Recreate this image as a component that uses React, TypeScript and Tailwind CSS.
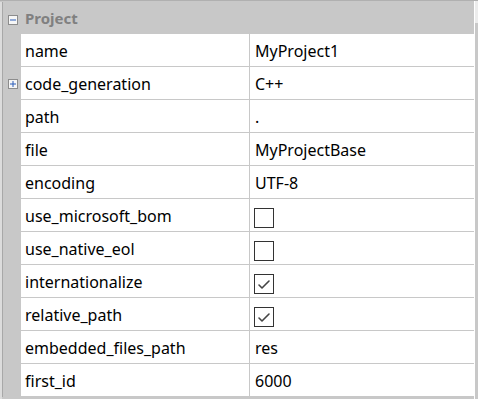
import React from "react";

type Row = { name: string; value?: string; check?: boolean; expand?: boolean };

const rows: Row[] = [
  { name: "name", value: "MyProject1" },
  { name: "code_generation", value: "C++", expand: true },
  { name: "path", value: "." },
  { name: "file", value: "MyProjectBase" },
  { name: "encoding", value: "UTF-8" },
  { name: "use_microsoft_bom", check: false },
  { name: "use_native_eol", check: false },
  { name: "internationalize", check: true },
  { name: "relative_path", check: true },
  { name: "embedded_files_path", value: "res" },
  { name: "first_id", value: "6000" },
];

function ToggleBox({ plus }: { plus: boolean }) {
  return (
    <svg width="10" height="10" viewBox="0 0 10 10" className="block">
      <rect x="0.5" y="0.5" width="9" height="9" fill="#f6f6f6" stroke="#8c8c8c" />
      <line x1="2" y1="5" x2="8" y2="5" stroke="#2a5db8" strokeWidth="1" />
      {plus && <line x1="5" y1="2" x2="5" y2="8" stroke="#2a5db8" strokeWidth="1" />}
    </svg>
  );
}

function CheckBox({ checked }: { checked: boolean }) {
  return (
    <svg width="20" height="20" viewBox="0 0 20 20" className="block mt-[9px]">
      <rect x="0.5" y="0.5" width="19" height="19" fill="#ffffff" stroke="#333333" />
      {checked && (
        <polyline
          points="5,11 8,14 15,7"
          fill="none"
          stroke="#444444"
          strokeWidth="1.6"
          strokeLinejoin="round"
          strokeLinecap="round"
        />
      )}
    </svg>
  );
}

export default function App() {
  return (
    <div
      className="w-[478px] h-[399px] bg-white flex flex-col overflow-hidden text-black"
      style={{ fontFamily: '"Noto Sans", "Noto Sans CJK SC", sans-serif' }}
    >
      <div className="h-[1px] bg-[#b0b0b0] w-full shrink-0" />
      <div className="flex flex-1 min-h-0">
        <div className="w-[474px] flex flex-col">
          <div className="h-[1px] bg-[#c8c8c8]" />
          <div className="flex items-center h-[32px] bg-[#c8c8c8] border-l-[2px] border-[#dcdcdc]">
            <div className="w-[19px] h-full flex items-center justify-center pl-[1px] pt-[4px] border-l border-[#a8a8a8]">
              <ToggleBox plus={false} />
            </div>
            <span className="pl-[4px] text-[15px] font-bold text-[#808080] leading-none">Project</span>
          </div>
          {rows.map((r, i) => (
            <div key={i} className="flex h-[33px] border-l-[2px] border-[#dcdcdc]">
              <div className="w-[19px] bg-[#c8c8c8] border-l border-[#a8a8a8] flex items-center justify-center pl-[1px]">
                {r.expand && <ToggleBox plus={true} />}
              </div>
              <div className="flex flex-1 border-b border-[#c8c8c8]">
                <div className="w-[229px] border-r border-[#c8c8c8] pl-[4px] flex items-center text-[16px] pt-[2px]">
                  {r.name}
                </div>
                <div className="flex-1 pl-[4px] flex items-start text-[16px]">
                  {r.check === undefined ? (
                    <span className="h-full flex items-center pt-[2px] pl-[1px]">{r.value}</span>
                  ) : (
                    <CheckBox checked={r.check} />
                  )}
                </div>
              </div>
            </div>
          ))}
          <div className="flex-1 bg-[#c8c8c8] border-l-[2px] border-[#dcdcdc]" />
        </div>
        <div className="w-[1px] bg-white" />
        <div className="w-[3px] flex flex-col">
          <div className="h-[22px] bg-[#ececec]" />
          <div className="flex-1 bg-[#c8c8c8]" />
        </div>
      </div>
    </div>
  );
}
